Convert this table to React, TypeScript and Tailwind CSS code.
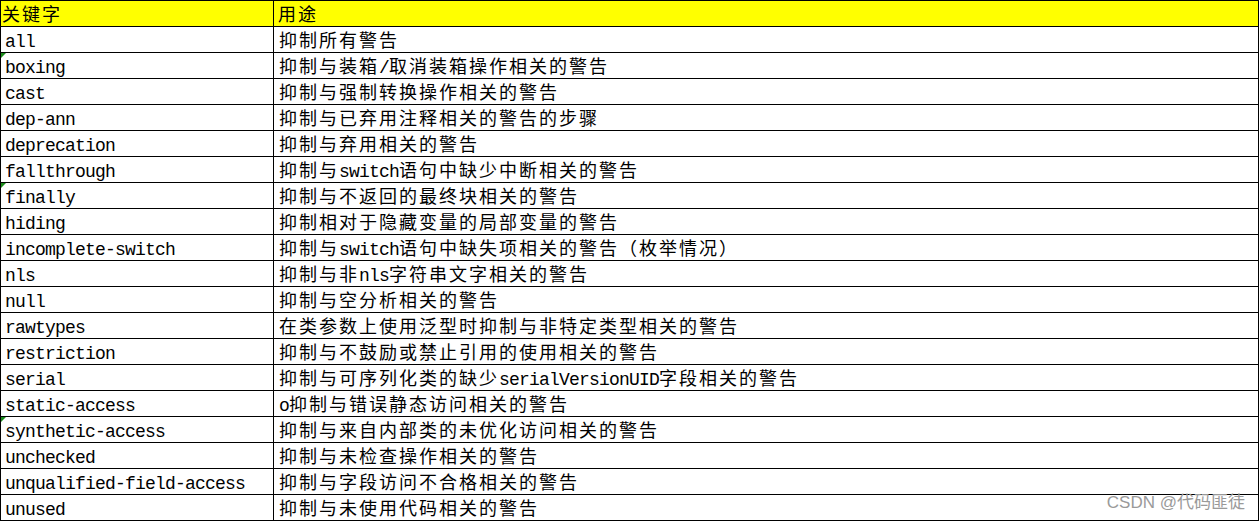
import React from "react";

interface Row {
    key: string;
    use: string;
    flag?: boolean;
}

const rows: Row[] = [
    { key: "all", use: "抑制所有警告" },
    { key: "boxing", use: "抑制与装箱/取消装箱操作相关的警告", flag: true },
    { key: "cast", use: "抑制与强制转换操作相关的警告" },
    { key: "dep-ann", use: "抑制与已弃用注释相关的警告的步骤" },
    { key: "deprecation", use: "抑制与弃用相关的警告" },
    { key: "fallthrough", use: "抑制与switch语句中缺少中断相关的警告" },
    { key: "finally", use: "抑制与不返回的最终块相关的警告", flag: true },
    { key: "hiding", use: "抑制相对于隐藏变量的局部变量的警告" },
    { key: "incomplete-switch", use: "抑制与switch语句中缺失项相关的警告（枚举情况）" },
    { key: "nls", use: "抑制与非nls字符串文字相关的警告" },
    { key: "null", use: "抑制与空分析相关的警告" },
    { key: "rawtypes", use: "在类参数上使用泛型时抑制与非特定类型相关的警告" },
    { key: "restriction", use: "抑制与不鼓励或禁止引用的使用相关的警告" },
    { key: "serial", use: "抑制与可序列化类的缺少serialVersionUID字段相关的警告" },
    { key: "static-access", use: "o抑制与错误静态访问相关的警告" },
    { key: "synthetic-access", use: "抑制与来自内部类的未优化访问相关的警告", flag: true },
    { key: "unchecked", use: "抑制与未检查操作相关的警告" },
    { key: "unqualified-field-access", use: "抑制与字段访问不合格相关的警告" },
    { key: "unused", use: "抑制与未使用代码相关的警告" },
];

// split text so CJK runs get full-width spacing and latin gets the mono font
const Mixed: React.FC<{ text: string }> = ({ text }) => {
    const parts = text.split(/([\u3000-\u9fff\uff00-\uffef]+)/).filter(Boolean);
    return (
        <span className="leading-[22px] whitespace-nowrap">
            {parts.map((p, i) =>
                /[\u3000-\u9fff\uff00-\uffef]/.test(p) ? (
                    <span
                        key={i}
                        className="text-[18px] tracking-[2px] [font-family:'Noto_Sans_CJK_SC',sans-serif]"
                    >
                        {p}
                    </span>
                ) : (
                    <span
                        key={i}
                        className="text-[18px] tracking-[-0.8px] [font-family:'Liberation_Mono',monospace]"
                    >
                        {p}
                    </span>
                )
            )}
        </span>
    );
};

export default function App() {
    return (
        <div className="relative w-[1260px] h-[521px] bg-white text-black overflow-hidden">
            <div className="w-[1259px] border-l border-t border-black">
                <div className="flex h-[26px] bg-[#ffff00] border-b border-black">
                    <div className="w-[273px] shrink-0 border-r border-black flex items-center pl-[1px]">
                        <Mixed text="关键字" />
                    </div>
                    <div className="flex-1 border-r border-black flex items-center pl-[4px]">
                        <Mixed text="用途" />
                    </div>
                </div>
                {rows.map((r) => (
                    <div key={r.key} className="flex h-[26px] border-b border-black">
                        <div className="relative w-[273px] shrink-0 border-r border-black flex items-center pl-[4px] pt-[3px]">
                            {r.flag && (
                                <span className="absolute top-0 left-0 w-0 h-0 border-t-[5px] border-r-[5px] border-t-[#1a8a1a] border-r-transparent" />
                            )}
                            <Mixed text={r.key} />
                        </div>
                        <div className="flex-1 border-r border-black flex items-center pl-[5px] pt-[1px]">
                            <Mixed text={r.use} />
                        </div>
                    </div>
                ))}
            </div>
            <div className="absolute right-[15px] top-[490px] text-[17px] text-[#9a9a9a] [font-family:'Liberation_Sans','Noto_Sans_CJK_SC',sans-serif]">
                CSDN @代码匪徒
            </div>
        </div>
    );
}
